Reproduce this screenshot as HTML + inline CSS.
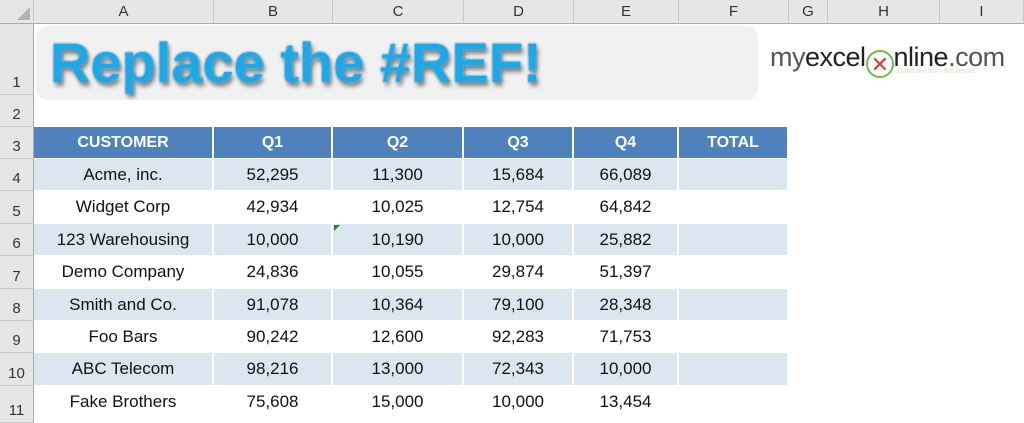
<!DOCTYPE html>
<html><head><style>
body{margin:0;width:1024px;height:423px;overflow:hidden;background:#fff;font-family:"Liberation Sans",sans-serif;position:relative}
.hd{position:absolute;top:0;height:24px;background:#e6e6e6;border-right:1px solid #c8c8c8;border-bottom:1px solid #ababab;box-sizing:border-box;text-align:center;line-height:24px;font-size:15px;color:#333}
.rh{position:absolute;left:0;width:34px;background:#e6e6e6;border-right:1px solid #ababab;border-bottom:1px solid #c8c8c8;box-sizing:border-box;text-align:center;font-size:15px;color:#333;display:flex;align-items:flex-end;justify-content:center;padding-bottom:3px}
.c{position:absolute;box-sizing:border-box;display:flex;align-items:center;justify-content:center;font-size:17px;color:#111;border-right:2px solid #fff;border-bottom:1px solid #fff}
.h{background:#4f81bd;color:#fff;font-weight:bold;font-size:16px}
.b{background:#dce6f1}
</style></head><body>
<div class="hd" style="left:0;width:34px"><svg width="34" height="24"><polygon points="30,7 30,20 17,20" fill="#b4b4b4"/></svg></div>
<div class="hd" style="left:34px;width:180px">A</div>
<div class="hd" style="left:214px;width:119px">B</div>
<div class="hd" style="left:333px;width:131px">C</div>
<div class="hd" style="left:464px;width:110px">D</div>
<div class="hd" style="left:574px;width:105px">E</div>
<div class="hd" style="left:679px;width:110px">F</div>
<div class="hd" style="left:789px;width:39px">G</div>
<div class="hd" style="left:828px;width:112px">H</div>
<div class="hd" style="left:940px;width:84px">I</div>

<div class="rh" style="top:24px;height:71px">1</div>
<div class="rh" style="top:95px;height:32px">2</div>
<div class="rh" style="top:127px;height:32px">3</div>
<div class="rh" style="top:159px;height:32px">4</div>
<div class="rh" style="top:191px;height:33px">5</div>
<div class="rh" style="top:224px;height:32px">6</div>
<div class="rh" style="top:256px;height:33px">7</div>
<div class="rh" style="top:289px;height:32px">8</div>
<div class="rh" style="top:321px;height:32px">9</div>
<div class="rh" style="top:353px;height:33px">10</div>
<div class="rh" style="top:386px;height:37px">11</div>

<div style="position:absolute;left:36px;top:26px;width:722px;height:74px;background:#f1f1f1;border-radius:12px"></div>
<div style="position:absolute;left:50px;top:27px;height:74px;line-height:72px;font-size:56px;font-weight:bold;color:#1fa7e6;letter-spacing:0;text-shadow:0 0 1px #fff,0 0 2px #0a5f9a,2px 4px 4px rgba(0,0,0,.45);white-space:nowrap">Replace the #REF!</div>

<div style="position:absolute;left:770px;top:42px;font-size:27px;color:#555;letter-spacing:-0.5px;white-space:nowrap">my<b style="color:#222;font-weight:normal">excel</b><span style="display:inline-block;width:28px;height:28px;border:2px solid #6bbf4a;border-radius:50%;vertical-align:-6px;text-align:center;line-height:26px;font-size:22px;color:#d9422b;box-sizing:border-box">✕</span><span style="color:#222">nline</span>.com</div>
<div style="position:absolute;left:896px;top:68px;font-size:7px;color:#cfe7c4">Stand out from the crowd</div>

<div id="t"></div>
<script>
var cols=[[34,180],[214,119],[333,131],[464,110],[574,105],[679,110]];
var rows=[127,159,191,224,256,289,321,353,386,418];
var data=[["CUSTOMER","Q1","Q2","Q3","Q4","TOTAL"],
["Acme, inc.","52,295","11,300","15,684","66,089",""],
["Widget Corp","42,934","10,025","12,754","64,842",""],
["123 Warehousing","10,000","10,190","10,000","25,882",""],
["Demo Company","24,836","10,055","29,874","51,397",""],
["Smith and Co.","91,078","10,364","79,100","28,348",""],
["Foo Bars","90,242","12,600","92,283","71,753",""],
["ABC Telecom","98,216","13,000","72,343","10,000",""],
["Fake Brothers","75,608","15,000","10,000","13,454",""]];
var h="";
for(var r=0;r<9;r++)for(var c=0;c<6;c++){
var cls=r==0?"c h":(r%2==1?"c b":"c");
h+='<div class="'+cls+'" style="left:'+cols[c][0]+'px;top:'+rows[r]+'px;width:'+cols[c][1]+'px;height:'+(rows[r+1]-rows[r])+'px">'+data[r][c]+'</div>';}
h+='<div style="position:absolute;left:334px;top:225px;width:0;height:0;border-top:6px solid #1e8a1e;border-right:6px solid transparent"></div>';
document.getElementById("t").innerHTML=h;
</script>
</body></html>
